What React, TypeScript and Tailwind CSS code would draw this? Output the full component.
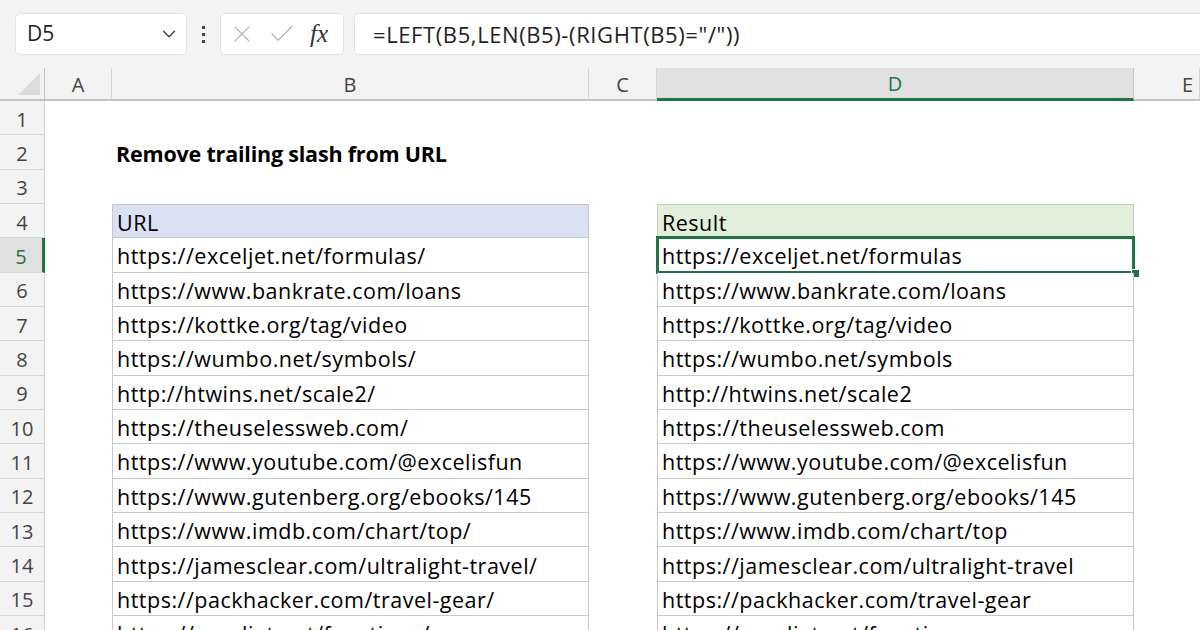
import React from "react";
import { ChevronDown, X, Check } from "lucide-react";

const rows: [string, string][] = [
  ["https://exceljet.net/formulas/", "https://exceljet.net/formulas"],
  ["https://www.bankrate.com/loans", "https://www.bankrate.com/loans"],
  ["https://kottke.org/tag/video", "https://kottke.org/tag/video"],
  ["https://wumbo.net/symbols/", "https://wumbo.net/symbols"],
  ["http://htwins.net/scale2/", "http://htwins.net/scale2"],
  ["https://theuselessweb.com/", "https://theuselessweb.com"],
  ["https://www.youtube.com/@excelisfun", "https://www.youtube.com/@excelisfun"],
  ["https://www.gutenberg.org/ebooks/145", "https://www.gutenberg.org/ebooks/145"],
  ["https://www.imdb.com/chart/top/", "https://www.imdb.com/chart/top"],
  ["https://jamesclear.com/ultralight-travel/", "https://jamesclear.com/ultralight-travel"],
  ["https://packhacker.com/travel-gear/", "https://packhacker.com/travel-gear"],
  ["https://exceljet.net/functions/", "https://exceljet.net/functions"],
];

const cellFont = { fontFamily: "'Open Sans', 'Liberation Sans', sans-serif" };

function RowHeader({ n, active }: { n: number; active?: boolean }) {
  return (
    <div
      className={
        "flex items-center justify-center border-b border-r border-[#d6d6d6] pt-[4px] text-[20px] " +
        (active ? "bg-[#e1e1e1] text-[#217346] border-r-[3px] border-r-[#217346]" : "bg-[#f3f3f3] text-[#444]")
      }
    >
      {n}
    </div>
  );
}

function TableCell({ text, bg, top, children }: { text?: string; bg?: string; top?: boolean; children?: React.ReactNode }) {
  return (
    <div
      className={
        "relative flex items-center whitespace-nowrap border-x border-b border-[#c8c8c8] pl-[4px] pt-[3px] text-[21.5px] tracking-[0.5px] text-black " +
        (top ? "border-t " : "") +
        (bg ?? "bg-white")
      }
    >
      {text}
      {children}
    </div>
  );
}

export default function App() {
  return (
    <div className="h-[630px] w-[1200px] overflow-hidden bg-white" style={cellFont}>
      {/* Formula bar */}
      <div className="flex h-[68px] items-center gap-0 bg-[#f3f3f3] pl-[15px]">
        <div className="flex h-[42px] w-[172px] items-center justify-between rounded-[5px] border border-[#e3e3e3] bg-white pl-[11px] pr-[6px] text-[21px] text-[#222]">
          <span>D5</span>
          <ChevronDown size={22} strokeWidth={1.6} className="text-[#444]" />
        </div>
        <div className="mx-[15px] flex flex-col items-center gap-[4px]">
          <div className="h-[3px] w-[3px] bg-[#444]" />
          <div className="h-[3px] w-[3px] bg-[#444]" />
          <div className="h-[3px] w-[3px] bg-[#444]" />
        </div>
        <div className="flex h-[42px] w-[124px] items-center rounded-[5px] border border-[#e3e3e3] bg-white pl-[7px]">
          <X size={28} strokeWidth={1} className="text-[#b5b5b5]" />
          <Check size={30} strokeWidth={1} className="ml-[11px] text-[#b5b5b5]" />
          <span
            className="ml-[13px] text-[25px] italic text-[#333]"
            style={{ fontFamily: "'Liberation Serif', serif" }}
          >
            fx
          </span>
        </div>
        <div className="ml-[10px] flex h-[42px] flex-1 items-center rounded-l-[5px] border border-r-0 border-[#e3e3e3] bg-white pl-[18px] text-[22px] tracking-[0.6px] text-[#222]">
          =LEFT(B5,LEN(B5)-(RIGHT(B5)="/"))
        </div>
      </div>

      {/* Sheet */}
      <div className="grid grid-cols-[45px_67px_477px_68px_477px_1fr] grid-rows-[33px_repeat(16,34.35px)]">
        {/* Column headers */}
        <div className="relative border-b-2 border-r border-[#c4c4c4] bg-[#f3f3f3]">
          <div
            className="absolute bottom-[4px] right-[4px] h-[22px] w-[22px] bg-[#dcdcdc]"
            style={{ clipPath: "polygon(100% 0, 100% 100%, 0 100%)" }}
          />
        </div>
        {["A", "B", "C", "D", "E"].map((c) => (
          <div
            key={c}
            className={
              "flex items-center justify-center border-r pt-[2px] text-[20px] " +
              (c === "D"
                ? "border-b-[3px] border-b-[#217346] border-r-[#c4c4c4] bg-[#e1e1e1] text-[#217346]"
                : "border-b-2 border-[#d4d4d4] border-b-[#c4c4c4] bg-[#f3f3f3] text-[#444]") +
              (c === "E" ? " justify-start pl-[48px]" : "")
            }
          >
            {c}
          </div>
        ))}

        {/* Row 1 */}
        <RowHeader n={1} />
        <div />
        <div />
        <div />
        <div />
        <div />

        {/* Row 2 */}
        <RowHeader n={2} />
        <div />
        <div className="flex items-center whitespace-nowrap pl-[4px] pt-[3px] text-[21.5px] font-bold tracking-[-0.2px] text-black">
          Remove trailing slash from URL
        </div>
        <div />
        <div />
        <div />

        {/* Row 3 */}
        <RowHeader n={3} />
        <div />
        <div />
        <div />
        <div />
        <div />

        {/* Row 4 */}
        <RowHeader n={4} />
        <div />
        <TableCell text="URL" bg="bg-[#d9e1f2]" top />
        <div />
        <TableCell text="Result" bg="bg-[#e2efda]" top />
        <div />

        {rows.map(([b, d], i) => {
          const n = i + 5;
          return (
            <React.Fragment key={n}>
              <RowHeader n={n} active={n === 5} />
              <div />
              <TableCell text={b} />
              <div />
              <TableCell text={d}>
                {n === 5 && (
                  <>
                    <div className="pointer-events-none absolute inset-x-[-2px] bottom-[-2px] top-[-2px] border-[3px] border-[#217346]" />
                    <div className="absolute bottom-[-6px] right-[-7px] h-[9px] w-[9px] border border-white bg-[#217346]" />
                  </>
                )}
              </TableCell>
              <div />
            </React.Fragment>
          );
        })}
      </div>
    </div>
  );
}
